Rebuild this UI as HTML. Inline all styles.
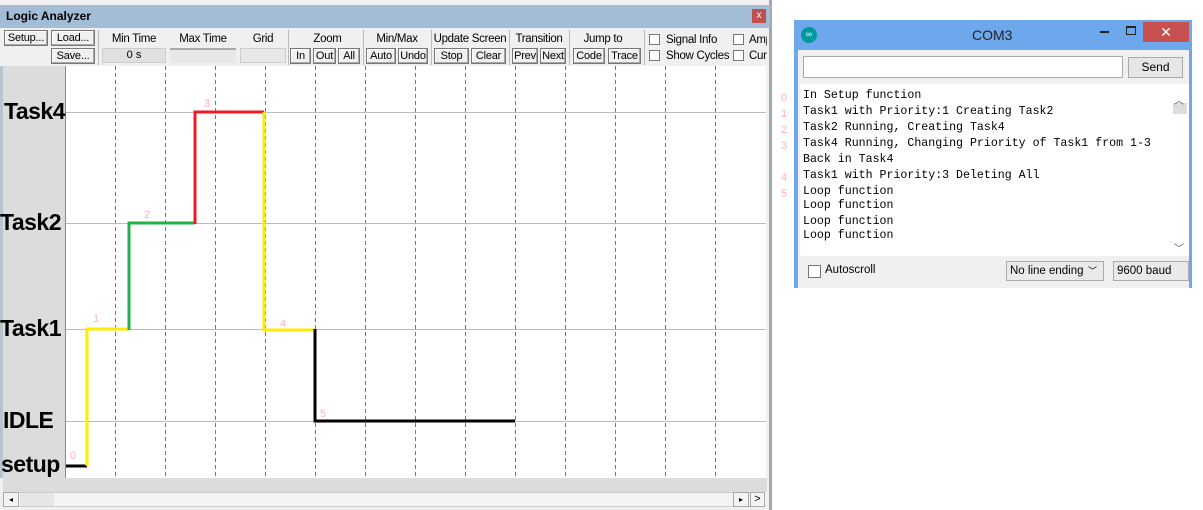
<!DOCTYPE html>
<html><head><meta charset="utf-8"><style>
*{margin:0;padding:0;box-sizing:border-box}
body{width:1203px;height:510px;background:#fff;position:relative;overflow:hidden;font-family:"Liberation Sans",sans-serif}
.a{position:absolute}
.btn{position:absolute;border:1px solid #777;background:#f0f0f0;font-size:11px;line-height:14px;text-align:center;color:#000;box-shadow:inset -1px -1px #aaa,inset 1px 1px #fff;white-space:nowrap;letter-spacing:-0.2px}
.lbl{position:absolute;font-size:11.5px;color:#000;text-align:center;white-space:nowrap;letter-spacing:-0.3px}
.sep{position:absolute;top:30px;width:1px;height:35px;background:#bbb}
.cb{position:absolute;width:11px;height:11px;border:1px solid #777;background:#fff}
.mono{font-family:"Liberation Mono",monospace;font-size:11.6px;position:absolute;left:803px;color:#000;white-space:nowrap}
.tl{position:absolute;font-size:23px;font-weight:bold;letter-spacing:-0.5px}
</style></head><body>
<div class="a" style="left:0;top:0;width:772px;height:510px;background:#f0f0f0;border-right:3px solid #a0a8b4"></div>
<div class="a" style="left:0;top:5px;width:770px;height:23px;background:#a3bdd6"></div>
<div class="a" style="left:6px;top:9px;font-size:12px;font-weight:bold;color:#000">Logic Analyzer</div>
<div class="a" style="left:752px;top:9px;width:14px;height:14px;background:#c0504d;color:#fff;font-size:10px;text-align:center;line-height:13px">x</div>
<div class="btn" style="left:4px;top:30px;width:44px;height:16px">Setup...</div>
<div class="btn" style="left:51px;top:30px;width:44px;height:16px">Load...</div>
<div class="btn" style="left:51px;top:48px;width:44px;height:16px">Save...</div>
<div class="sep" style="left:98px"></div>
<div class="lbl" style="left:102px;top:33px;width:64px">Min Time</div>
<div class="a" style="left:102px;top:48px;width:64px;height:15px;background:#e0e0e0;border:1px solid #ccc;font-size:11px;text-align:center">0 s</div>
<div class="lbl" style="left:170px;top:33px;width:66px">Max Time</div>
<div class="a" style="left:170px;top:48px;width:66px;height:15px;background:#e8e8e8;border-top:2px solid #aaa"></div>
<div class="lbl" style="left:240px;top:33px;width:46px">Grid</div>
<div class="a" style="left:240px;top:48px;width:46px;height:15px;background:#e8e8e8;border:1px solid #ccc"></div>
<div class="sep" style="left:288px"></div>
<div class="lbl" style="left:290px;top:33px;width:75px">Zoom</div>
<div class="btn" style="left:290px;top:48px;width:21px;height:16px">In</div>
<div class="btn" style="left:313px;top:48px;width:23px;height:16px">Out</div>
<div class="btn" style="left:338px;top:48px;width:22px;height:16px">All</div>
<div class="sep" style="left:363px"></div>
<div class="lbl" style="left:365px;top:33px;width:64px">Min/Max</div>
<div class="btn" style="left:366px;top:48px;width:30px;height:16px">Auto</div>
<div class="btn" style="left:398px;top:48px;width:30px;height:16px">Undo</div>
<div class="sep" style="left:431px"></div>
<div class="lbl" style="left:432px;top:33px;width:76px">Update Screen</div>
<div class="btn" style="left:434px;top:48px;width:35px;height:16px">Stop</div>
<div class="btn" style="left:471px;top:48px;width:35px;height:16px">Clear</div>
<div class="sep" style="left:509px"></div>
<div class="lbl" style="left:510px;top:33px;width:58px">Transition</div>
<div class="btn" style="left:512px;top:48px;width:26px;height:16px">Prev</div>
<div class="btn" style="left:540px;top:48px;width:26px;height:16px">Next</div>
<div class="sep" style="left:569px"></div>
<div class="lbl" style="left:570px;top:33px;width:66px">Jump to</div>
<div class="btn" style="left:573px;top:48px;width:32px;height:16px">Code</div>
<div class="btn" style="left:608px;top:48px;width:33px;height:16px">Trace</div>
<div class="sep" style="left:644px"></div>
<div class="cb" style="left:649px;top:34px"></div><div class="lbl" style="left:666px;top:34px;text-align:left">Signal Info</div>
<div class="cb" style="left:649px;top:50px"></div><div class="lbl" style="left:666px;top:50px;text-align:left">Show Cycles</div>
<div class="cb" style="left:733px;top:34px"></div><div class="lbl" style="left:749px;top:34px;text-align:left;width:18px;overflow:hidden">Amp</div>
<div class="cb" style="left:733px;top:50px"></div><div class="lbl" style="left:749px;top:50px;text-align:left;width:18px;overflow:hidden">Cur</div>
<div class="a" style="left:0;top:66px;width:66px;height:412px;background:#dcdcdc;border-left:3px solid #b8c4d2;border-right:1px solid #888"></div>
<div class="tl" style="left:4px;top:98px">Task4</div>
<div class="tl" style="left:0px;top:209px">Task2</div>
<div class="tl" style="left:0px;top:315px">Task1</div>
<div class="tl" style="left:3px;top:407px">IDLE</div>
<div class="tl" style="left:1px;top:451px">setup</div>
<svg class="a" style="left:66px;top:66px" width="700" height="412">
<rect width="700" height="412" fill="#fff"/>
<g stroke="#777" stroke-dasharray="4,3">
<line x1="49.5" y1="0" x2="49.5" y2="412"/><line x1="99.5" y1="0" x2="99.5" y2="412"/><line x1="149.5" y1="0" x2="149.5" y2="412"/><line x1="199.5" y1="0" x2="199.5" y2="412"/><line x1="249.5" y1="0" x2="249.5" y2="412"/><line x1="299.5" y1="0" x2="299.5" y2="412"/><line x1="349.5" y1="0" x2="349.5" y2="412"/><line x1="399.5" y1="0" x2="399.5" y2="412"/><line x1="449.5" y1="0" x2="449.5" y2="412"/><line x1="499.5" y1="0" x2="499.5" y2="412"/><line x1="549.5" y1="0" x2="549.5" y2="412"/><line x1="599.5" y1="0" x2="599.5" y2="412"/><line x1="649.5" y1="0" x2="649.5" y2="412"/>
</g>
<g stroke="#bbb"><line x1="0" y1="46.5" x2="700" y2="46.5"/><line x1="0" y1="157.5" x2="700" y2="157.5"/><line x1="0" y1="263.5" x2="700" y2="263.5"/><line x1="0" y1="355.5" x2="700" y2="355.5"/></g>
<g fill="none" stroke-width="3">
<polyline points="0,400 21,400" stroke="#000"/>
<polyline points="21,400 21,263 63,263" stroke="#ffeb00"/>
<polyline points="63,264 63,157 129,157" stroke="#22b14c"/>
<polyline points="129,158 129,46 198,46" stroke="#ed1c24"/>
<polyline points="198,46 198,264 249,264" stroke="#ffeb00"/>
<polyline points="249,263 249,355 449,355" stroke="#000"/>
</g>
<g fill="#ffaec9" font-size="11" font-family="Liberation Sans,sans-serif">
<text x="4" y="393">0</text><text x="27" y="256">1</text><text x="78" y="152">2</text><text x="138" y="41">3</text><text x="214" y="261">4</text><text x="254" y="351">5</text></g>
</svg>
<div class="a" style="left:3px;top:478px;width:764px;height:14px;background:#dcdcdc"></div>
<div class="a" style="left:3px;top:492px;width:762px;height:15px;background:#f4f4f4;border:1px solid #ccc"></div>
<div class="a" style="left:3px;top:492px;width:16px;height:15px;border:1px solid #aaa;font-size:8px;text-align:center;line-height:13px">◂</div>
<div class="a" style="left:20px;top:493px;width:34px;height:13px;background:#e6e6e6"></div>
<div class="a" style="left:733px;top:492px;width:16px;height:15px;border:1px solid #aaa;font-size:8px;text-align:center;line-height:13px">▸</div>
<div class="a" style="left:750px;top:492px;width:15px;height:15px;border:1px solid #aaa;font-size:11px;text-align:center;line-height:13px">&gt;</div>
<div class="a" style="left:794px;top:20px;width:398px;height:268px;background:#6ea8ec"></div>
<div class="a" style="left:801px;top:27px;width:16px;height:16px;border-radius:50%;background:#00979c;color:#fff;font-size:9px;text-align:center;line-height:15px">∞</div>
<div class="a" style="left:972px;top:27px;font-size:14px;color:#222">COM3</div>
<div class="a" style="left:1100px;top:31px;width:9px;height:2px;background:#222"></div>
<div class="a" style="left:1126px;top:26px;width:10px;height:9px;border:1px solid #222;border-top-width:2px"></div>
<div class="a" style="left:1143px;top:22px;width:46px;height:20px;background:#c75050;color:#fff;font-size:14px;text-align:center;line-height:20px">✕</div>
<div class="a" style="left:798px;top:50px;width:391px;height:238px;background:#f0f0f0"></div>
<div class="a" style="left:803px;top:56px;width:320px;height:22px;background:#fff;border:1px solid #aaa"></div>
<div class="a" style="left:1128px;top:57px;width:55px;height:21px;background:#e6e6e6;border:1px solid #aaa;font-size:12px;text-align:center;line-height:19px">Send</div>
<div class="a" style="left:800px;top:84px;width:389px;height:172px;background:#fff"></div>
<div class="a" style="left:1173px;top:103px;width:14px;height:11px;background:#ddd"></div>
<div class="a" style="left:1174px;top:92px;font-size:10px;color:#555">︿</div>
<div class="a" style="left:1174px;top:240px;font-size:10px;color:#555">﹀</div>
<div class="mono" style="top:89px">In Setup function</div>
<div class="mono" style="top:105px">Task1 with Priority:1 Creating Task2</div>
<div class="mono" style="top:121px">Task2 Running, Creating Task4</div>
<div class="mono" style="top:137px">Task4 Running, Changing Priority of Task1 from 1-3</div>
<div class="mono" style="top:153px">Back in Task4</div>
<div class="mono" style="top:169px">Task1 with Priority:3 Deleting All</div>
<div class="mono" style="top:185px">Loop function</div>
<div class="mono" style="top:199px">Loop function</div>
<div class="mono" style="top:215px">Loop function</div>
<div class="mono" style="top:229px">Loop function</div>
<div class="a" style="left:781px;font-size:11px;color:#ffaec9;top:90px;line-height:16px">0<br>1<br>2<br>3<br><br>4<br>5</div>
<div class="cb" style="left:808px;top:265px;width:13px;height:13px"></div>
<div class="a" style="left:825px;top:264px;font-size:11.5px">Autoscroll</div>
<div class="a" style="left:1006px;top:261px;width:98px;height:20px;background:#eaeaea;border:1px solid #aaa;font-size:11.5px;line-height:18px;padding-left:3px;white-space:nowrap">No line ending <span style="float:right;margin-right:6px;font-size:9px">﹀</span></div>
<div class="a" style="left:1113px;top:261px;width:76px;height:20px;background:#eaeaea;border:1px solid #aaa;font-size:11.5px;line-height:18px;padding-left:3px">9600 baud</div>
</body></html>
